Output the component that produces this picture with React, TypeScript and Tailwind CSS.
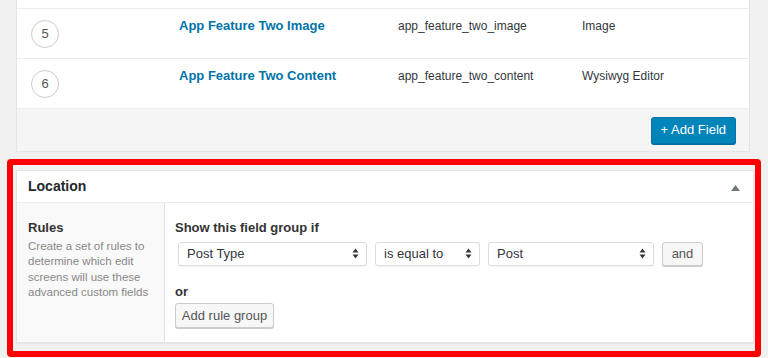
import React from 'react';

const font = { fontFamily: '"Liberation Sans", Arial, sans-serif' };

interface FieldRowProps {
  order: number;
  label: string;
  name: string;
  type: string;
}

function FieldRow({ order, label, name, type }: FieldRowProps) {
  return (
    <div className="flex h-[50px] border-b border-[#eeeeee] bg-white">
      <div className="flex w-[162px] items-center pl-[14px]">
        <span className="flex h-[28px] w-[28px] items-center justify-center rounded-full border border-[#cccccc] text-[13px] text-[#555]">
          {order}
        </span>
      </div>
      <div className="w-[219px] pt-[7px] text-[13px] font-bold text-[#0073aa]">{label}</div>
      <div className="w-[184px] pt-[8px] text-[12px] text-[#32373c]">{name}</div>
      <div className="pt-[8px] text-[12px] text-[#32373c]">{type}</div>
    </div>
  );
}

function SelectArrows() {
  return (
    <svg width="7" height="11" viewBox="0 0 7 11" className="shrink-0">
      <path d="M3.5 0.5 L6.5 4.5 L0.5 4.5 Z" fill="#32373c" />
      <path d="M3.5 10.5 L6.5 6.5 L0.5 6.5 Z" fill="#32373c" />
    </svg>
  );
}

function FakeSelect({ value, width }: { value: string; width: string }) {
  return (
    <div
      className={`flex h-[24px] ${width} items-center justify-between rounded-[3px] border border-[#dddddd] bg-white pl-[8px] pr-[7px] text-[13px] text-[#32373c] shadow-[0_1px_1px_rgba(0,0,0,0.04)]`}
    >
      <span>{value}</span>
      <SelectArrows />
    </div>
  );
}

export default function App() {
  return (
    <div className="h-[358px] w-[768px] overflow-hidden bg-[#f1f1f1]" style={font}>
      <div className="ml-[16px] w-[734px] border-x border-[#e5e5e5]">
        <div className="h-[9px] border-b border-[#eeeeee] bg-white" />
        <FieldRow order={5} label="App Feature Two Image" name="app_feature_two_image" type="Image" />
        <FieldRow order={6} label="App Feature Two Content" name="app_feature_two_content" type="Wysiwyg Editor" />
        <div className="flex h-[43px] items-center justify-end border-b border-[#e5e5e5] bg-[#f5f5f5] pr-[13px]">
          <button className="h-[27px] rounded-[3px] border border-[#0073aa] bg-[#0085ba] px-[9px] text-[13px] text-white shadow-[0_1px_0_#006799]">
            + Add Field
          </button>
        </div>
      </div>

      <div className="mx-[7px] mt-[7px] h-[198px] rounded-[4px] border-[6px] border-[#ff0000] pl-[3px] pr-[1px] pt-[5px]">
        <div className="border border-[#e5e5e5] bg-white shadow-[0_1px_1px_rgba(0,0,0,0.04)]">
          <div className="flex h-[32px] items-center justify-between border-b border-[#eeeeee] pl-[11px] pr-[13px]">
            <span className="text-[14px] font-bold text-[#23282d]">Location</span>
            <svg width="9" height="6" viewBox="0 0 9 6" className="mt-[3px]">
              <path d="M4.5 0 L9 6 L0 6 Z" fill="#72777c" />
            </svg>
          </div>
          <div className="flex h-[139px]">
            <div className="w-[148px] border-r border-[#e1e1e1] bg-[#f9f9f9] pl-[11px] pr-[6px] pt-[15px]">
              <div className="text-[13px] font-bold text-[#333]">Rules</div>
              <p className="mt-[1px] text-[11.5px] leading-[15.5px] text-[#888]">
                Create a set of rules to determine which edit screens will use these advanced custom fields
              </p>
            </div>
            <div className="flex-1 pl-[10px] pt-[15px]">
              <div className="text-[13px] font-bold text-[#333]">Show this field group if</div>
              <div className="mt-[4px] flex items-center gap-[8px] pl-[3px]">
                <FakeSelect value="Post Type" width="w-[189px]" />
                <FakeSelect value="is equal to" width="w-[105px]" />
                <FakeSelect value="Post" width="w-[166px]" />
                <button className="h-[24px] w-[41px] rounded-[3px] border border-[#cccccc] bg-[#f7f7f7] text-[13px] text-[#555] shadow-[0_1px_0_#cccccc]">
                  and
                </button>
              </div>
              <div className="mt-[16px] text-[13px] font-bold text-[#333]">or</div>
              <button className="mt-[2px] h-[25px] w-[99px] rounded-[3px] border border-[#cccccc] bg-[#f7f7f7] text-[13px] text-[#555] shadow-[0_1px_0_#cccccc]">
                Add rule group
              </button>
            </div>
          </div>
        </div>
      </div>
    </div>
  );
}
